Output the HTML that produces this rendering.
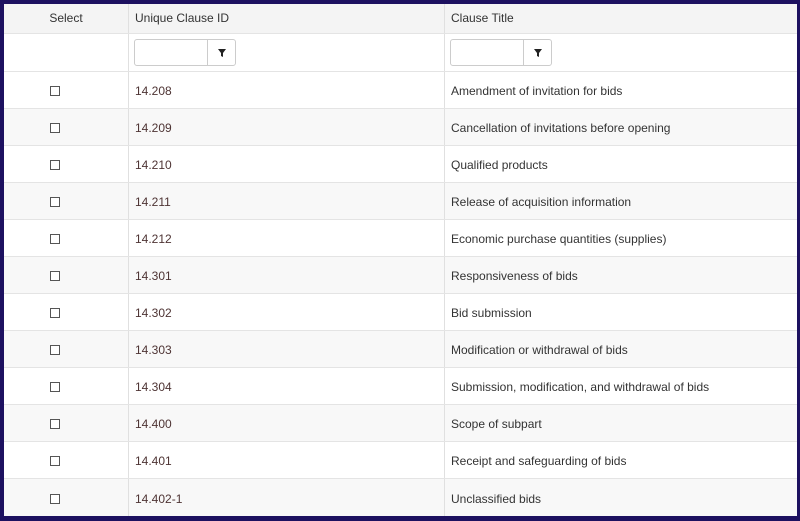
<!DOCTYPE html>
<html><head><style>
*{margin:0;padding:0;box-sizing:border-box}
body{width:800px;height:521px;background:#1d1160;position:relative;overflow:hidden;font-family:"Liberation Sans",sans-serif;font-size:12px;color:#333}
#t{position:absolute;left:4px;top:4px;width:793px;height:512px;background:#fff;overflow:hidden}
.r{position:absolute;left:0;width:793px;border-bottom:1px solid #e4e4e4}
.c{position:absolute;top:0;height:100%;display:flex;align-items:center}
.c1{left:0;width:124px;justify-content:center}
.c2{left:124px;width:316px;border-left:1px solid #e0e0e0;padding-left:6px}
.c3{left:440px;width:353px;border-left:1px solid #e0e0e0;padding-left:6px}
.d .c{padding-top:2px}
.d .c1{justify-content:flex-start;padding-left:46px}
.id{color:#4e3434}
.cb{width:10px;height:10px;border:1px solid #555;background:#fff}
.f{width:102px;height:27px;border:1px solid #ccc;border-radius:3px;position:relative;background:#fff;margin-left:-1px}
.f i{position:absolute;left:72px;top:0;bottom:0;border-left:1px solid #ccc}
.f svg{position:absolute;left:82px;top:8px}
</style></head><body><div id="t">
<div class="r" style="top:0;height:30px;background:#f4f4f4"><div class="c c1" style="padding-bottom:2px">Select</div><div class="c c2" style="padding-bottom:2px">Unique Clause ID</div><div class="c c3" style="padding-bottom:2px">Clause Title</div></div>
<div class="r" style="top:30px;height:38px"><div class="c c1"></div><div class="c c2"><div class="f"><i></i><svg width="10" height="10" viewBox="0 0 10 10"><path d="M1 1h8L6 5v4L4 8V5z" fill="#222"/></svg></div></div><div class="c c3"><div class="f"><i></i><svg width="10" height="10" viewBox="0 0 10 10"><path d="M1 1h8L6 5v4L4 8V5z" fill="#222"/></svg></div></div></div>
<div class="r d" style="top:68px;height:37px"><div class="c c1"><div class="cb"></div></div><div class="c c2 id">14.208</div><div class="c c3">Amendment of invitation for bids</div></div>
<div class="r d" style="top:105px;height:37px;background:#f8f8f8"><div class="c c1"><div class="cb"></div></div><div class="c c2 id">14.209</div><div class="c c3">Cancellation of invitations before opening</div></div>
<div class="r d" style="top:142px;height:37px"><div class="c c1"><div class="cb"></div></div><div class="c c2 id">14.210</div><div class="c c3">Qualified products</div></div>
<div class="r d" style="top:179px;height:37px;background:#f8f8f8"><div class="c c1"><div class="cb"></div></div><div class="c c2 id">14.211</div><div class="c c3">Release of acquisition information</div></div>
<div class="r d" style="top:216px;height:37px"><div class="c c1"><div class="cb"></div></div><div class="c c2 id">14.212</div><div class="c c3">Economic purchase quantities (supplies)</div></div>
<div class="r d" style="top:253px;height:37px;background:#f8f8f8"><div class="c c1"><div class="cb"></div></div><div class="c c2 id">14.301</div><div class="c c3">Responsiveness of bids</div></div>
<div class="r d" style="top:290px;height:37px"><div class="c c1"><div class="cb"></div></div><div class="c c2 id">14.302</div><div class="c c3">Bid submission</div></div>
<div class="r d" style="top:327px;height:37px;background:#f8f8f8"><div class="c c1"><div class="cb"></div></div><div class="c c2 id">14.303</div><div class="c c3">Modification or withdrawal of bids</div></div>
<div class="r d" style="top:364px;height:37px"><div class="c c1"><div class="cb"></div></div><div class="c c2 id">14.304</div><div class="c c3">Submission, modification, and withdrawal of bids</div></div>
<div class="r d" style="top:401px;height:37px;background:#f8f8f8"><div class="c c1"><div class="cb"></div></div><div class="c c2 id">14.400</div><div class="c c3">Scope of subpart</div></div>
<div class="r d" style="top:438px;height:37px"><div class="c c1"><div class="cb"></div></div><div class="c c2 id">14.401</div><div class="c c3">Receipt and safeguarding of bids</div></div>
<div class="r d" style="top:475px;height:37px;background:#f8f8f8;border-bottom:0"><div class="c c1"><div class="cb"></div></div><div class="c c2 id">14.402-1</div><div class="c c3">Unclassified bids</div></div>
</div></body></html>
